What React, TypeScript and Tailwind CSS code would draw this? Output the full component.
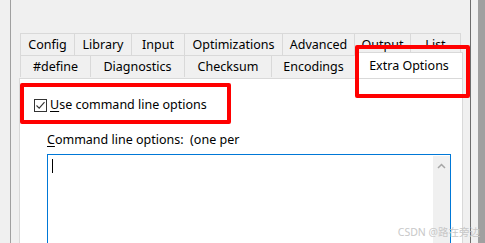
import React from 'react';

type Tab = { label: string; w: number };

const topRow: Tab[] = [
  { label: 'Config', w: 54 },
  { label: 'Library', w: 57 },
  { label: 'Input', w: 53 },
  { label: 'Optimizations', w: 98 },
  { label: 'Advanced', w: 72 },
  { label: 'Output', w: 56 },
  { label: 'List', w: 51 },
];

const bottomRow: Tab[] = [
  { label: '#define', w: 70 },
  { label: 'Diagnostics', w: 94 },
  { label: 'Checksum', w: 87 },
  { label: 'Encodings', w: 84 },
];

const TabButton: React.FC<{ tab: Tab; last?: boolean }> = ({ tab, last }) => (
  <div
    className={`h-[22px] shrink-0 flex items-center justify-center bg-[#f0f0f0] border-t border-l border-[#d9d9d9] ${last ? 'border-r' : ''}`}
    style={{ width: tab.w }}
  >
    {tab.label}
  </div>
);

const App: React.FC = () => {
  return (
    <div className="relative w-[485px] h-[243px] overflow-hidden flex bg-[#f0f0f0] text-[12.5px] leading-[16px] text-black font-['Noto_Sans','Noto_Sans_CJK_SC',sans-serif]">
      <div className="w-[10px] shrink-0" />
      <div className="w-px shrink-0 bg-[#a0a0a0]" />
      <div className="w-[8px] shrink-0" />

      {/* tab control */}
      <div className="w-[444px] shrink-0 flex flex-col pt-[33px]">
        <div className="flex pl-px">
          {topRow.map((t, i) => (
            <TabButton key={t.label} tab={t} last={i === topRow.length - 1} />
          ))}
        </div>
        <div className="flex pl-px">
          {bottomRow.map((t) => (
            <TabButton key={t.label} tab={t} />
          ))}
          <div className="relative z-10 -mt-[3px] h-[26px] w-[108px] shrink-0 flex items-start justify-center pt-[5px] bg-white border-t border-l border-r border-[#d9d9d9]">
            Extra Options
          </div>
        </div>

        <div className="flex-1 flex flex-col bg-white border border-[#d9d9d9]">
          <div className="mt-[4px] w-[211px] h-[41px] border-4 border-[#ff0000] rounded-[2px] flex items-start pt-[12px] pl-[10px]">
            <div className="w-[13px] h-[13px] border border-[#333333] bg-white flex items-center justify-center">
              <svg width="11" height="11" viewBox="0 0 11 11">
                <path d="M1.5 5.5 L4.2 8.2 L9.5 2.2" fill="none" stroke="#333333" strokeWidth="1.1" />
              </svg>
            </div>
            <span className="ml-[3px] -mt-[2px]">
              <span className="underline underline-offset-2">U</span>se command line options
            </span>
          </div>

          <div className="ml-[27px] mt-[8px] whitespace-pre">
            <span className="underline underline-offset-2">C</span>ommand line options:  (one per
          </div>

          <div className="ml-[27px] mt-[6px] w-[404px] h-[100px] flex border border-[#0078d7] bg-white">
            <div className="flex-1">
              <div className="ml-[4px] mt-[4px] w-px h-[14px] bg-black" />
            </div>
            <div className="w-[17px] mt-px bg-[#f0f0f0] flex justify-center pt-[7px]">
              <svg width="9" height="6" viewBox="0 0 9 6">
                <path d="M1 5 L4.5 1.5 L8 5" fill="none" stroke="#a6a6a6" strokeWidth="1.5" />
              </svg>
            </div>
          </div>
        </div>
      </div>

      <div className="w-[7px] shrink-0" />
      <div className="w-px shrink-0 bg-[#6d6d6d]" />
      <div className="w-[7px] shrink-0" />
      <div className="flex-1 bg-[#a0a0a0]" />

      {/* annotation box around the selected tab */}
      <div className="absolute left-[355px] top-[45px] w-[115px] h-[53px] border-4 border-[#ff0000] rounded-[2px] z-20" />

      {/* watermark */}
      <div className="absolute right-[5px] top-[226px] text-[10.5px] leading-[12px] text-[#c8c8c8] z-20">
        CSDN @路在旁边
      </div>
    </div>
  );
};

export default App;
